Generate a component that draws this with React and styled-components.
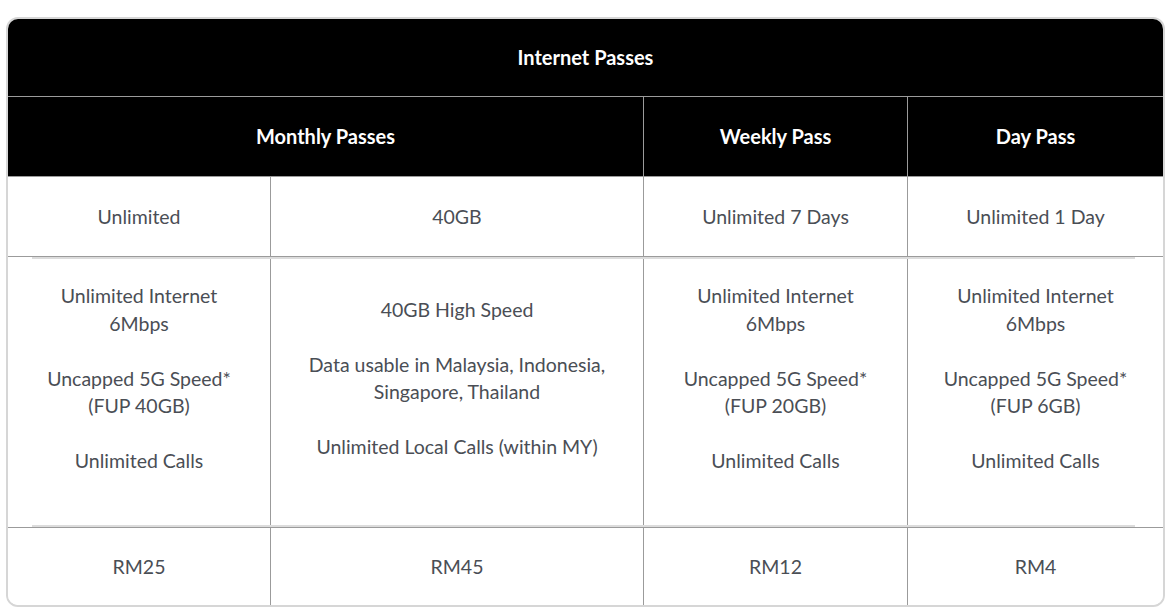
import React from 'react';
import styled, { createGlobalStyle } from 'styled-components';

const GlobalStyle = createGlobalStyle`
  html, body {
    margin: 0;
    padding: 0;
    background: #fff;
  }
  body {
    font-family: Lato, "Open Sans", Arial, sans-serif;
  }
`;

const Page = styled.div`
  padding: 17px 7px 9px 6px;
`;

const Table = styled.div`
  display: grid;
  grid-template-columns: 263px 373px 264px 1fr;
  grid-template-rows: 78px 80px 80px 271px 77px;
  width: 1159px;
  box-sizing: border-box;
  border: 2px solid #d6d6d6;
  border-radius: 12px;
  overflow: hidden;
`;

const Cell = styled.div`
  box-sizing: border-box;
  display: flex;
  flex-direction: column;
  align-items: center;
  justify-content: center;
  text-align: center;
  padding: 0 12px;
  grid-row: ${({ row }) => row};
  grid-column: ${({ col, span = 1 }) => `${col} / span ${span}`};
  border-right: ${({ last }) => (last ? 'none' : '1px solid #9b9b9b')};
  border-bottom: ${({ bottom }) => (bottom ? 'none' : '1px solid #9b9b9b')};
  background: ${({ head }) => (head ? '#000' : '#fff')};
  color: ${({ head }) => (head ? '#fff' : '#4a4e55')};
  font-size: ${({ head }) => (head ? '20px' : '19.5px')};
  font-weight: ${({ head }) => (head ? 700 : 400)};
  line-height: 27.5px;
`;

const Block = styled.p`
  margin: 0 0 27.5px;
`;

const Rule = styled.div`
  grid-row: 4;
  grid-column: 1 / -1;
  align-self: ${({ edge }) => edge};
  height: 2px;
  margin: ${({ edge }) => (edge === 'start' ? '0 28px 0 24px' : '0 28px 1px 24px')};
  background: #dcdcdc;
  pointer-events: none;
  z-index: 1;
`;

const features = [
  [['Unlimited Internet', '6Mbps'], ['Uncapped 5G Speed*', '(FUP 40GB)'], ['Unlimited Calls']],
  [['40GB High Speed'], ['Data usable in Malaysia, Indonesia,', 'Singapore, Thailand'], ['Unlimited Local Calls (within MY)']],
  [['Unlimited Internet', '6Mbps'], ['Uncapped 5G Speed*', '(FUP 20GB)'], ['Unlimited Calls']],
  [['Unlimited Internet', '6Mbps'], ['Uncapped 5G Speed*', '(FUP 6GB)'], ['Unlimited Calls']],
];

const names = ['Unlimited', '40GB', 'Unlimited 7 Days', 'Unlimited 1 Day'];
const prices = ['RM25', 'RM45', 'RM12', 'RM4'];

const App = () => (
  <>
    <GlobalStyle />
    <Page>
      <Table>
        <Cell row={1} col={1} span={4} head last>Internet Passes</Cell>

        <Cell row={2} col={1} span={2} head>Monthly Passes</Cell>
        <Cell row={2} col={3} head>Weekly Pass</Cell>
        <Cell row={2} col={4} head last>Day Pass</Cell>

        {names.map((n, i) => (
          <Cell row={3} col={i + 1} key={n} last={i === 3}>{n}</Cell>
        ))}

        {features.map((blocks, i) => (
          <Cell row={4} col={i + 1} key={i} last={i === 3}>
            {blocks.map((lines, j) => (
              <Block key={j}>
                {lines.map((l, k) => (
                  <React.Fragment key={k}>
                    {k > 0 && <br />}
                    {l}
                  </React.Fragment>
                ))}
              </Block>
            ))}
          </Cell>
        ))}
        <Rule edge="start" />
        <Rule edge="end" />

        {prices.map((p, i) => (
          <Cell row={5} col={i + 1} key={p} bottom last={i === 3}>{p}</Cell>
        ))}
      </Table>
    </Page>
  </>
);

export default App;
